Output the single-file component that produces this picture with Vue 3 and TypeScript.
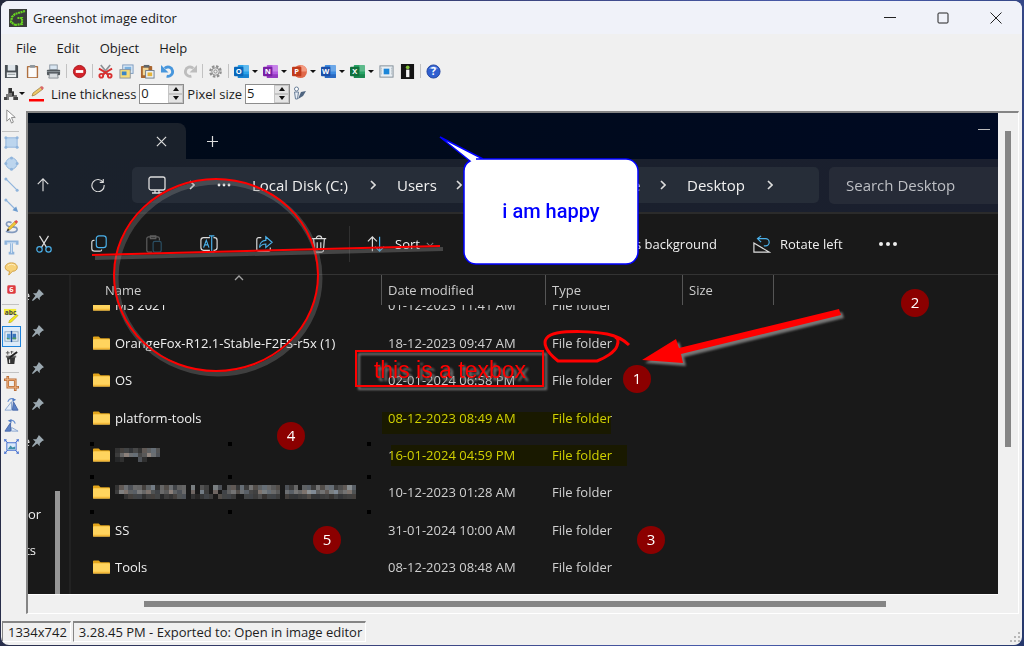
<script setup lang="ts">
import { ref } from 'vue'

interface Tool { id: string; label: string; menu?: boolean }

const menus = ['File', 'Edit', 'Object', 'Help']

const toolbar: (Tool | null)[] = [
  { id: 'save', label: 'Save' }, { id: 'clipboard', label: 'Copy to clipboard' }, { id: 'print', label: 'Print' }, null,
  { id: 'remove', label: 'Delete' }, null,
  { id: 'cut', label: 'Cut' }, { id: 'copy', label: 'Copy' }, { id: 'paste', label: 'Paste' },
  { id: 'undo', label: 'Undo' }, { id: 'redo', label: 'Redo' }, null,
  { id: 'gear', label: 'Settings' }, null,
  { id: 'outlook', label: 'Outlook', menu: true }, { id: 'onenote', label: 'OneNote', menu: true },
  { id: 'powerpoint', label: 'PowerPoint', menu: true }, { id: 'word', label: 'Word', menu: true },
  { id: 'excel', label: 'Excel', menu: true }, { id: 'screen', label: 'Image editor' }, { id: 'imgur', label: 'Imgur' }, null,
  { id: 'help', label: 'Help' },
]

const tools: (Tool | null)[] = [
  { id: 'pointer', label: 'Selection' }, null,
  { id: 'rect', label: 'Rectangle' }, { id: 'ellipse', label: 'Ellipse' }, { id: 'line', label: 'Line' },
  { id: 'arrow', label: 'Arrow' }, { id: 'freehand', label: 'Freehand' }, { id: 'text', label: 'Text box' },
  { id: 'bubble', label: 'Speech bubble' }, { id: 'counter', label: 'Counter' }, null,
  { id: 'highlight', label: 'Highlight' }, { id: 'obfuscate', label: 'Obfuscate' }, { id: 'effects', label: 'Effects' }, null,
  { id: 'crop', label: 'Crop' }, { id: 'rotateRight', label: 'Rotate clockwise' },
  { id: 'rotateLeft', label: 'Rotate counter-clockwise' }, { id: 'resize', label: 'Resize' },
]

const office = (light: string, dark: string, letter: string) =>
  `<rect x="4" y="1" width="12" height="14" rx="1" fill="${light}"/><path d="M10 1h5a1 1 0 0 1 1 1v6h-6z" fill="#fff" opacity=".25"/><path d="M4 11h12v3a1 1 0 0 1-1 1H5a1 1 0 0 1-1-1z" fill="${dark}" opacity=".55"/><rect x="0" y="3" width="10" height="10" rx="1" fill="${dark}"/><text x="5" y="11" text-anchor="middle" font-size="8" font-weight="700" font-family="Open Sans, sans-serif" fill="#fff">${letter}</text>`

const nodes = (pts: number[][]) =>
  pts.map(([x, y]) => `<circle cx="${x}" cy="${y}" r="1.6" fill="#8fb4dc"/>`).join('')

const icons: Record<string, string> = {
  save: '<path d="M1 1h13l1 1v13H1z" fill="#4a5055"/><rect x="4" y="1" width="8" height="6" fill="#dfe5ea"/><rect x="3" y="9" width="10" height="5" fill="#eef1f3"/><path d="M4 11h8" stroke="#8c9499"/>',
  clipboard: '<rect x="2" y="2" width="12" height="13" rx="1" fill="#b0703f"/><rect x="3.500" y="3.500" width="9" height="10.500" fill="#fbfbfb"/><rect x="5" y="1" width="6" height="3" rx="1" fill="#8e979e"/>',
  print: '<rect x="4" y="1" width="8" height="5" fill="#d9e6f2" stroke="#8c98a3"/><rect x="1" y="6" width="14" height="6" rx="1" fill="#555b60"/><path d="M1 8h14" stroke="#888f94"/><path d="M4 10h8l1 5H3z" fill="#d8dcdf" stroke="#8a9095"/>',
  remove: '<circle cx="8" cy="8" r="6.5" fill="#d3232a" stroke="#a9151b"/><rect x="4" y="6.5" width="8" height="3" fill="#fff"/>',
  cut: '<path d="M3 1l8 10M13 1L5 11" stroke="#8b9095" stroke-width="1.8"/><g fill="none" stroke="#d93030" stroke-width="2"><circle cx="3.500" cy="12.500" r="2"/><circle cx="12.500" cy="12.500" r="2"/><path d="M1 5l7 4M15 5L8 9l-3 3M8 9l3 3"/></g>',
  copy: '<rect x="4" y="1" width="11" height="9" fill="#dbe9f7" stroke="#7a99bd"/><rect x="6" y="3" width="7" height="4" fill="#79b0df"/><rect x="1" y="6" width="11" height="9" fill="#f6dc78" stroke="#8b93a0"/><rect x="3" y="8" width="5" height="4" fill="#3b84c6"/>',
  paste: '<rect x="1" y="2" width="12" height="13" rx="1" fill="#a9652f"/><rect x="4" y="1" width="6" height="3" fill="#5f666c"/><rect x="3" y="4" width="6" height="8" fill="#f0d595"/><rect x="6" y="7" width="9" height="8" fill="#eef3f8" stroke="#6e7b88"/><rect x="8" y="9" width="5" height="4" fill="#e4b33a"/>',
  undo: '<path d="M4 4.500a5 5 0 1 1 2 8.500" fill="none" stroke="#4796dc" stroke-width="3"/><path d="M0 1v8h8z" fill="#4796dc"/>',
  redo: '<path d="M12 4.500a5 5 0 1 0-2 8.500" fill="none" stroke="#bdbdbd" stroke-width="3"/><path d="M16 1v8H8z" fill="#bdbdbd"/>',
  gear: '<circle cx="8" cy="8" r="5.500" fill="none" stroke="#8f8f8f" stroke-width="2.500" stroke-dasharray="2.600 1.700"/><circle cx="8" cy="8" r="4" fill="#e0e0e0" stroke="#8f8f8f"/><circle cx="8" cy="8" r="1.600" fill="#f0f0f0" stroke="#8f8f8f"/>',
  outlook: office('#2ba3ea', '#0a67ba', 'O'),
  onenote: office('#b45be0', '#7a1fa5', 'N'),
  powerpoint: '<circle cx="9" cy="8" r="7" fill="#e0694a"/><path d="M9 1a7 7 0 0 1 7 7H9z" fill="#f39a80"/><rect x="0" y="3" width="10" height="10" rx="1" fill="#c13b1b"/><text x="5" y="11" text-anchor="middle" font-size="8" font-weight="700" font-family="Open Sans, sans-serif" fill="#fff">P</text>',
  word: office('#3d8be0', '#1b4fa8', 'W'),
  excel: office('#27a365', '#10703c', 'X'),
  screen: '<rect x="1" y="2" width="14" height="12" fill="#e8eef3" stroke="#7e8b96"/><rect x="5" y="5" width="6" height="6" fill="#1b86d8"/><path d="M2.500 4v8M13.500 4v8" stroke="#9aa5ad" stroke-dasharray="1 1"/>',
  imgur: '<rect x="1" y="0" width="14" height="16" fill="#141414"/><rect x="6.500" y="6" width="3.500" height="8" fill="#f4f4f4"/><circle cx="8.200" cy="3.500" r="2" fill="#83c33a"/>',
  help: '<circle cx="8" cy="8" r="7" fill="#2f5fd0" stroke="#2446a0"/><path d="M3 5a6 5 0 0 1 10 0z" fill="#7fa4ee"/><text x="8" y="12" text-anchor="middle" font-size="11" font-weight="700" font-family="Open Sans, sans-serif" fill="#fff">?</text>',
  pointer: '<path d="M3 1v12l3-3 2 5 2-1-2-5h4z" fill="#fff" stroke="#8a8a8a"/>',
  rect: '<rect x="2" y="3" width="12" height="10" fill="#bcd5ee" stroke="#8fb4dc"/>' + nodes([[2, 3], [14, 3], [2, 13], [14, 13]]),
  ellipse: '<circle cx="8" cy="8" r="6" fill="#bcd5ee" stroke="#8fb4dc"/>' + nodes([[8, 2], [8, 14], [2, 8], [14, 8]]),
  line: '<path d="M2 2l12 12" stroke="#8fb4dc" stroke-width="1.300"/>' + nodes([[2, 2], [14, 14]]),
  arrow: '<path d="M2 2l10 10" stroke="#8fb4dc" stroke-width="1.300"/><path d="M15 15l-6-2 4-4z" fill="#6a9bcf"/>' + nodes([[2, 2]]),
  freehand: '<path d="M8 4C2 1 1 7 5 8s9-1 9 3-8 4-12 2" fill="none" stroke="#8299bd" stroke-width="1.800"/><path d="M4 12l1-3 7-7 2 2-7 7z" fill="#efc637" stroke="#a8862a" stroke-width=".6"/><path d="M11 3l2-2 2 2-2 2z" fill="#e05050"/><path d="M3 13l1-3 2 2z" fill="#333"/>',
  text: '<path d="M2 5V2h12v3M8 2v12M5 14h6" fill="none" stroke="#8fb4dc" stroke-width="3"/><path d="M3 3h10M8 3v11" stroke="#d3e4f5"/>',
  bubble: '<path d="M8 2c8 0 8 9 1 9l-4 4 1-4C-1 10 0 2 8 2z" fill="#f7d27a" stroke="#cf9d3e"/><path d="M4 5c2-2 6-2 8 0" stroke="#fff0c5" fill="none"/>',
  counter: '<rect x="3.500" y="3.500" width="9" height="9" rx="1.500" fill="#dd3a40"/><text x="8" y="11" text-anchor="middle" font-size="8" font-weight="700" font-family="Open Sans, sans-serif" fill="#fff">6</text>',
  highlight: '<path d="M6 13l7-6 2 1-7 7-3 1z" fill="#f3e818" stroke="#a9a11c" stroke-width=".6"/><rect x="0" y="1" width="13" height="6" fill="#f3ec3a"/><text x="7" y="7" text-anchor="middle" font-size="7" font-weight="700" font-family="Open Sans, sans-serif" fill="#444">abc</text>',
  obfuscate: '<rect x="1" y="3" width="14" height="10" fill="#eef5fb" stroke="#8aa4bd"/><rect x="3" y="5" width="4" height="6" fill="#5a9bd5"/><rect x="9" y="5" width="4" height="6" fill="#3976bb"/><path d="M3 9l4 2H3zM9 9h4v2H9z" fill="#4f9960"/><path d="M8 2v12" stroke="#1a4fa0" stroke-width="1.500"/>',
  effects: '<path d="M3 7h9l-1 8H4z" fill="#333"/><path d="M2 6h11v2H2z" fill="#666"/><path d="M6 8L14 2" stroke="#222" stroke-width="2"/><path d="M4 1v4M2 3h4M8 1v3M7 2h3" stroke="#555"/><path d="M6 10v4" stroke="#fff"/>',
  crop: '<path d="M4 0v12h12M0 4h12v12" fill="none" stroke="#b96c35" stroke-width="2.800"/><path d="M4 1v11h11M1 4h11v11" fill="none" stroke="#efb384"/>',
  rotateRight: '<path d="M1 14h7V5z" fill="#e3ecf8" stroke="#8ba6cf"/><path d="M9 14h6L10 5z" fill="#5c82c5" stroke="#4868aa"/><path d="M4 5c2-4 5-4 7-2" fill="none" stroke="#6a91cf" stroke-width="1.300"/><path d="M9 1l4 2-4 2z" fill="#4c78c2"/>',
  rotateLeft: '<path d="M1 14h6V5z" fill="#5c82c5" stroke="#4868aa"/><path d="M8 14h7l-7-4z" fill="#e3ecf8" stroke="#8ba6cf"/><path d="M12 6c-1-3-3-4-5-3" fill="none" stroke="#6a91cf" stroke-width="1.300"/><path d="M8 1L4 3l4 2z" fill="#4c78c2"/>',
  resize: '<rect x="3" y="4" width="10" height="8" fill="#d8e8fa" stroke="#4470d0"/><path d="M4 11l3-4 2 2 3-1v3z" fill="#408fa8"/><path d="M1 1l3 3M15 1l-3 3M1 15l3-3M15 15l-3-3" stroke="#4470d0"/><path d="M0 1h3M1 0v3M13 1h3M15 0v3M0 15h3M1 13v3M13 15h3M15 13v3" stroke="#4470d0"/>',
}

const selected = ref('obfuscate')
const thickness = ref(0)
const pixelSize = ref(5)

const pins = ['e', '', '', '', 'e']

interface FileRow { name: string; date: string; mosaic?: string[] }

/* Brightness maps of the pixelated names, one hex digit per block. */
const files: FileRow[] = [
  { name: 'MS 2021', date: '01-12-2023 11:41 AM' },
  { name: 'OrangeFox-R12.1-Stable-F2FS-r5x (1)', date: '18-12-2023 09:47 AM' },
  { name: 'OS', date: '02-01-2024 06:58 PM' },
  { name: 'platform-tools', date: '08-12-2023 08:49 AM' },
  { name: '', date: '16-01-2024 04:59 PM', mosaic: ['2332425565', '3686645964', '1200042000'] },
  {
    name: '', date: '10-12-2023 01:28 AM',
    mosaic: [
      '256476357264636607053074055263745675404360553746634585',
      '387559674375854706073060367465437767506586798675786774',
      '002333233313234402123304333003334233303223342233232333',
    ],
  },
  { name: 'SS', date: '31-01-2024 10:00 AM' },
  { name: 'Tools', date: '08-12-2023 08:48 AM' },
]

const tints = ['#9a9a9a', '#9aa6b4', '#a89a92', '#8d8d8d', '#a3a9ad']
const blocks = (rows: string[]) =>
  rows.flatMap((row, y) =>
    [...row].map((digit, x) => ({ x, y, fill: tints[(x * 7 + y * 3) % 5], alpha: Math.min(parseInt(digit, 16) / 10, 0.85) })))

const counters = [
  { n: 1, x: 637, y: 379 }, { n: 2, x: 915, y: 303 }, { n: 3, x: 651, y: 540 },
  { n: 4, x: 291, y: 436 }, { n: 5, x: 327, y: 540 },
]
const handles = [444, 477, 512].flatMap(y => [92, 230, 369].map(x => ({ x, y })))
</script>

<template>
  <div class="desktop">
    <main class="window">
      <header class="titlebar">
        <svg class="logo" viewBox="0 0 18 18" aria-hidden="true">
          <rect width="18" height="18" fill="#3a3d3b" />
          <path d="M16 2L6 5 3 8l-1 5 4 3M6 16l7-1V9H8" fill="none" stroke="#67d420" stroke-width="2.200" stroke-dasharray="2 .6" />
        </svg>
        <h1>Greenshot image editor</h1>
        <div class="window-buttons">
          <button aria-label="Minimize"><svg viewBox="0 0 12 12"><path d="M0 5.500h12" /></svg></button>
          <button aria-label="Maximize"><svg viewBox="0 0 12 12"><rect x="1" y="1" width="10" height="10" rx="1" /></svg></button>
          <button aria-label="Close"><svg viewBox="0 0 12 12"><path d="M.5.5l11 11M11.500.5l-11 11" /></svg></button>
        </div>
      </header>

      <nav class="menubar">
        <button v-for="menu in menus" :key="menu">{{ menu }}</button>
      </nav>

      <div class="toolbar">
        <template v-for="(tool, i) in toolbar" :key="i">
          <i v-if="!tool" class="divider"></i>
          <button v-else :aria-label="tool.label">
            <svg viewBox="0 0 16 16" v-html="icons[tool.id]"></svg>
            <span v-if="tool.menu" class="caret"></span>
          </button>
        </template>
      </div>

      <div class="properties">
        <button class="fill" aria-label="Obfuscation mode">
          <svg viewBox="0 0 16 16"><path d="M5 2h4v3h2v4h3v5h-4v-3H6v3H1v-2h2V8h2z" fill="#777" /><path d="M6 2h3v4h2v4H9V7H6z" fill="#333" /><path d="M1 11h3v3H1zM11 11h4v3h-4z" fill="#444" /></svg>
          <span class="caret"></span>
        </button>
        <button class="colour" aria-label="Line colour">
          <svg viewBox="0 0 16 16"><path d="M3 10l1-3 8-6 2 2-8 6z" fill="#edc96a" stroke="#97763a" stroke-width=".7" /><path d="M11 1l2-1 2 2-2 2z" fill="#d96868" /><path d="M0 13h15v2.500H0z" fill="#f00" /></svg>
        </button>
        <label for="thickness">Line thickness</label>
        <span class="spinner">
          <input id="thickness" v-model="thickness" type="text" />
          <span class="steps">
            <button aria-label="Thicker" @click="thickness++"><i class="up"></i></button>
            <button aria-label="Thinner" @click="thickness--"><i class="down"></i></button>
          </span>
        </span>
        <label for="pixels">Pixel size</label>
        <span class="spinner">
          <input id="pixels" v-model="pixelSize" type="text" />
          <span class="steps">
            <button aria-label="Larger" @click="pixelSize++"><i class="up"></i></button>
            <button aria-label="Smaller" @click="pixelSize--"><i class="down"></i></button>
          </span>
        </span>
        <button class="shadow-toggle" aria-label="Drop shadow">
          <svg viewBox="0 0 16 16"><circle cx="3.500" cy="3" r="2" fill="#fff" stroke="#6a7f99" /><path d="M1.500 6h4l-1 7h-2z" fill="#e6edf5" stroke="#6a7f99" /><path d="M5 13l3-7 5-1-3 5z" fill="#4f6580" /></svg>
        </button>
      </div>

      <div class="workspace">
        <div class="toolbox">
          <template v-for="(tool, i) in tools" :key="i">
            <i v-if="!tool" class="rule"></i>
            <button v-else :aria-label="tool.label" :class="{ active: selected === tool.id }" @click="selected = tool.id">
              <svg viewBox="0 0 16 16" v-html="icons[tool.id]"></svg>
            </button>
          </template>
        </div>

        <div class="viewport">
          <div class="shot">
            <div class="tabs">
              <div class="tab"><button aria-label="Close tab"><svg viewBox="0 0 12 12"><path d="M1 1l10 10M11 1L1 11" /></svg></button></div>
              <button aria-label="New tab"><svg viewBox="0 0 12 12"><path d="M6 0v12M0 6h12" /></svg></button>
              <span class="minimize"></span>
            </div>

            <div class="navigation">
              <svg class="up-arrow" viewBox="0 0 16 16"><path d="M8 15V1M2 7l6-6 6 6" /></svg>
              <svg class="refresh" viewBox="0 0 16 16"><path d="M14 5a7 7 0 1 0 1 3M14 1v4h-4" /></svg>
              <div class="address">
                <svg class="monitor" viewBox="0 0 18 18"><rect x="1" y="1" width="16" height="13" rx="2" /><path d="M7 14v3M11 14v3M4 17h10" /></svg>
                <svg class="chevron first-chevron" viewBox="0 0 6 10"><path d="M1 1l4 4-4 4" /></svg>
                <svg class="dots" viewBox="0 0 14 4"><circle cx="2" cy="2" r="1.400" /><circle cx="7" cy="2" r="1.400" /><circle cx="12" cy="2" r="1.400" /></svg>
                <span>Local Disk (C:)</span>
                <svg class="chevron" viewBox="0 0 6 10"><path d="M1 1l4 4-4 4" /></svg>
                <span>Users</span>
                <svg class="chevron" viewBox="0 0 6 10"><path d="M1 1l4 4-4 4" /></svg>
                <span>e</span>
                <svg class="chevron" viewBox="0 0 6 10"><path d="M1 1l4 4-4 4" /></svg>
                <span>Desktop</span>
                <svg class="chevron" viewBox="0 0 6 10"><path d="M1 1l4 4-4 4" /></svg>
              </div>
              <input class="search" type="text" placeholder="Search Desktop" aria-label="Search Desktop" />
            </div>

            <div class="commands">
              <div class="file-actions">
                <button aria-label="Cut"><svg viewBox="0 0 20 20"><path d="M5 1l8 13M15 1L7 14" /><g class="blue"><circle cx="5" cy="16" r="3" /><circle cx="15" cy="16" r="3" /></g></svg></button>
                <button aria-label="Copy"><svg viewBox="0 0 20 20"><path d="M5 6H4a2 2 0 0 0-2 2v7a3 3 0 0 0 3 3h6a2 2 0 0 0 2-2" /><rect class="blue" x="7" y="1" width="11" height="13" rx="3" /></svg></button>
                <button class="dim" aria-label="Paste"><svg viewBox="0 0 20 20"><path d="M8 19H4a2 2 0 0 1-2-2V4a2 2 0 0 1 2-2h10a2 2 0 0 1 2 2v2M6 1h6v3H6z" /><rect class="blue" x="9" y="7" width="9" height="12" rx="2" /></svg></button>
                <button aria-label="Rename"><svg viewBox="0 0 20 20"><path d="M11 3H4a3 3 0 0 0-3 3v8a3 3 0 0 0 3 3h7M15 3h1a3 3 0 0 1 3 3v8a3 3 0 0 1-3 3h-1" /><path class="blue" d="M13 1v18M10 1h6M10 19h6M4 14l3-8 3 8M5 11h4" /></svg></button>
                <button aria-label="Share"><svg viewBox="0 0 20 20"><path d="M7 3H4a2 2 0 0 0-2 2v11a2 2 0 0 0 2 2h11a2 2 0 0 0 2-2v-2" /><path class="blue" d="M12 2l7 6-7 6v-4c-4 0-6 2-7 4 0-5 3-8 7-8z" /></svg></button>
                <button aria-label="Delete"><svg viewBox="0 0 20 20"><path d="M2 4h16M4 4l1 13a2 2 0 0 0 2 2h6a2 2 0 0 0 2-2l1-13M7 4a3 3 0 0 1 6 0M8 8v7M12 8v7" /></svg></button>
              </div>
              <i class="bar"></i>
              <button class="sort"><svg viewBox="0 0 20 20"><path d="M6 18V2M1 7l5-5 5 5" /><path class="blue" d="M14 2v16M9 13l5 5 5-5" /></svg>Sort<svg class="down-chevron" viewBox="0 0 10 6"><path d="M1 1l4 4 4-4" /></svg></button>
              <button class="background">s background</button>
              <button class="rotate"><svg viewBox="0 0 20 20"><path d="M1 9v10h17z" /><path class="blue" d="M9 1L5 4l4 4M5 4h9a4 4 0 0 1 0 8h-2" /></svg>Rotate left</button>
              <button class="more" aria-label="More"><svg viewBox="0 0 20 4"><circle cx="3" cy="2" r="2" /><circle cx="10" cy="2" r="2" /><circle cx="17" cy="2" r="2" /></svg></button>
            </div>

            <div class="browser">
              <aside class="places">
                <div v-for="(p, i) in pins" :key="i" class="pin">
                  <span>{{ p }}</span>
                  <svg viewBox="0 0 14 14"><path d="M8 0l6 6-2 1-3 3 0 3-3-3-5 4-1-1 4-5-3-3h4l2-3z" /></svg>
                </div>
                <div></div>
                <div>or</div>
                <div class="cut-off">ts</div>
                <i class="places-thumb"></i>
              </aside>
              <table>
                <thead>
                  <tr>
                    <th class="name">Name<svg viewBox="0 0 10 6"><path d="M1 5l4-4 4 4" /></svg></th>
                    <th class="date">Date modified</th>
                    <th class="type">Type</th>
                    <th class="size">Size</th>
                    <th></th>
                  </tr>
                </thead>
                <tbody>
                  <tr v-for="(file, i) in files" :key="i" :class="{ first: i === 0 }">
                    <td>
                      <div class="cell file">
                        <svg class="folder" :class="{ pixelated: file.mosaic }" viewBox="0 0 18 14"><path d="M0 1a1 1 0 0 1 1-1h5l2 2h9a1 1 0 0 1 1 1v3H0z" fill="#e3a51a" /><rect y="3" width="18" height="11" rx="1" fill="#ffd45e" /><path d="M0 12h18v1a1 1 0 0 1-1 1H1a1 1 0 0 1-1-1z" fill="#f4b93a" /></svg>
                        <svg v-if="file.mosaic" class="mosaic" :class="{ long: file.mosaic[0].length > 20 }" :viewBox="`0 0 ${file.mosaic[0].length} 3`" preserveAspectRatio="none" shape-rendering="crispEdges">
                          <rect v-for="(b, k) in blocks(file.mosaic)" :key="k" :x="b.x" :y="b.y" width="1" height="1" :fill="b.fill" :fill-opacity="b.alpha" />
                        </svg>
                        <template v-else>{{ file.name }}</template>
                      </div>
                    </td>
                    <td><div class="cell">{{ file.date }}</div></td>
                    <td><div class="cell">File folder</div></td>
                    <td></td>
                    <td></td>
                  </tr>
                </tbody>
              </table>
            </div>

            <div class="marker marker-one"></div>
            <div class="marker marker-two"></div>

            <svg class="annotations" viewBox="28 113 970 481">
              <rect v-for="h in handles" :key="`${h.x}-${h.y}`" :x="h.x - 2" :y="h.y - 2" width="4" height="4" fill="#000" />
              <g fill="none">
                <ellipse cx="218" cy="278" rx="102" ry="96" stroke="#888" stroke-opacity=".35" stroke-width="5" />
                <ellipse cx="216" cy="275" rx="102" ry="96" stroke="#f00" stroke-width="2" />
                <path d="M95 258l348-9" stroke="#888" stroke-opacity=".4" stroke-width="4" />
                <path d="M92 255l348-9" stroke="#f00" stroke-width="2" />
              </g>
              <g class="cast">
                <path d="M642 360l34-21 3 9 160-39 2 6-160 39 2 9z" fill="#f00" />
              </g>
              <path d="M629 345c-6-6-12-9-22-11-16-3-38-3-50-1-10 2-14 7-11 14 2 6 7 10 12 14h39c8-3 18-9 20-15 2-5 1-8-2-9" fill="none" stroke="#f00" stroke-width="3" stroke-linejoin="round" />
              <g class="cast">
                <rect x="356" y="351" width="187" height="35" fill="none" stroke="#f00" stroke-width="2" />
                <text class="textbox" x="450" y="378">this is a texbox</text>
              </g>
              <path d="M476 159h150a12 12 0 0 1 12 12v81a12 12 0 0 1-12 12H476a12 12 0 0 1-12-12v-81q0-7 6-10l-30-24 43 22z" fill="#fff" stroke="#00f" stroke-width="1.500" />
              <text class="speech" x="551" y="218">i am happy</text>
              <g v-for="c in counters" :key="c.n">
                <circle :cx="c.x" :cy="c.y" r="14" fill="#8b0000" />
                <text class="number" :x="c.x" :y="c.y + 5">{{ c.n }}</text>
              </g>
            </svg>
          </div>
          <div class="vertical-scroll"><i></i></div>
          <div class="horizontal-scroll"><i></i></div>
        </div>
      </div>

      <footer class="status">
        <span>1334x742</span>
        <span>3.28.45 PM - Exported to: Open in image editor</span>
        <svg class="grip" viewBox="0 0 10 10"><path d="M8 0h2v2H8zM4 4h2v2H4zM8 4h2v2H8zM0 8h2v2H0zM4 8h2v2H4zM8 8h2v2H8z" fill="#b8b8b8" /></svg>
      </footer>
    </main>
  </div>
</template>

<style>
body { margin: 0; }
</style>

<style scoped>
* { box-sizing: border-box; }
button { padding: 0; border: 0; background: none; color: inherit; font: inherit; }
svg { display: block; flex: none; }

.desktop {
  display: flex;
  min-height: 100vh;
  padding: 1px 2px 1px 1px;
  background: linear-gradient(100deg, #23283c, #3c4580 45%, #4a5dae 75%, #26386c);
  font-family: "Open Sans", "Noto Sans", sans-serif;
  font-size: 13px;
  color: #1c1c1c;
}
.window { flex: 1; min-width: 0; display: flex; flex-direction: column; border-radius: 8px; overflow: hidden; background: #f0f0f0; }

.titlebar { display: flex; align-items: center; height: 33px; padding-left: 8px; background: #f0f2f9; }
.logo { width: 18px; height: 18px; margin-right: 6px; }
h1 { margin: 0; font-size: 13px; font-weight: 400; }
.window-buttons { display: flex; margin-left: auto; }
.window-buttons button { display: grid; place-items: center; width: 53px; height: 33px; }
.window-buttons svg { width: 12px; height: 12px; fill: none; stroke: #222; }

.menubar { display: flex; align-items: center; gap: 20px; height: 27px; padding-left: 15px; }

.toolbar { display: flex; align-items: center; gap: 4px; height: 20px; padding-left: 2px; }
.toolbar button { display: flex; align-items: center; }
.toolbar svg { width: 17px; height: 15px; }
.divider { width: 1px; height: 14px; background: #c2c2c2; }
.caret { width: 6px; border: solid transparent; border-width: 3px 3px 0; border-top-color: #111; }
.toolbar .caret { margin-left: 2px; }

.properties { display: flex; align-items: center; height: 25px; padding-left: 2px; }
.properties svg { width: 16px; height: 16px; }
.fill { display: flex; align-items: center; width: 25px; }
.colour { width: 16px; margin: 0 6px 0 1px; }
.spinner { display: flex; width: 45px; height: 20px; margin: 0 3px; border: 1px solid #8d8d8d; background: #fff; }
.spinner input { flex: 1; min-width: 0; width: 0; padding: 0 0 2px 1px; border: 0; outline: 0; background: none; font: inherit; color: inherit; }
.steps { display: grid; width: 15px; grid-template-rows: 1fr 1fr; background: #e4e4e4; }
.steps button { display: grid; place-items: center; border: 1px solid #c5c5c5; }
.up, .down { border: solid transparent; border-width: 0 3px 4px; border-bottom-color: #111; }
.down { border-width: 4px 3px 0; border-top-color: #111; }

.workspace { flex: 1; display: flex; padding-right: 3px; }
.toolbox { display: flex; flex-direction: column; width: 25px; padding-left: 1px; }
.toolbox button { display: grid; place-items: center; width: 19px; height: 21px; }
.toolbox svg { width: 15px; height: 15px; }
.toolbox .active { border: 1px solid #1e84dc; background: #dcebf9; }
.rule { width: 17px; height: 5px; border-bottom: 1px solid #c2c2c2; }

.viewport {
  flex: 1;
  min-width: 0;
  display: grid;
  grid-template: 1fr 19px / 1fr 20px;
  margin-top: 5px;
  border: solid;
  border-width: 2px 1px 1px 2px;
  border-color: #858585 #fff #fff #858585;
}
.vertical-scroll { padding: 18px 0 0 7px; }
.vertical-scroll i { display: block; width: 6px; height: 316px; background: #858585; }
.horizontal-scroll { padding: 6px 11.5% 0 12%; border-top: 1px solid #fff; }
.horizontal-scroll i { display: block; height: 6px; background: #858585; }

.shot { position: relative; isolation: isolate; display: flex; flex-direction: column; min-width: 0; overflow: hidden; background: #191919; color: #f0f0f0; }
.shot svg { fill: none; stroke: #ddd; stroke-width: 1.3; }
.shot .blue { stroke: #4bb2ec; fill: none; }

.tabs { display: flex; align-items: center; height: 46px; padding-top: 10px; background: linear-gradient(90deg, #000a18, #000a22); }
.tabs svg { width: 11px; height: 11px; }
.tab { display: flex; align-items: center; justify-content: flex-end; width: 158px; height: 36px; padding-right: 19px; margin-right: 21px; border-radius: 0 8px 0 0; background: #1a212b; }
.minimize { align-self: flex-start; width: 12px; height: 1px; margin: 6px 8px 0 auto; background: #bbb; }

.navigation { display: flex; align-items: center; height: 55px; padding-bottom: 1px; border-bottom: 2px solid #2b2b2b; background: linear-gradient(90deg, #1a212b, #1a1f2e); font-size: 15px; }
.up-arrow { width: 14px; height: 14px; margin: 0 41px 0 8px; }
.refresh { width: 14px; height: 14px; margin-right: 27px; }
.address { display: grid; grid-template-columns: 41px 28px 35px 118px 27px 59px 176px 28px 27px 80px 1fr; align-items: center; width: 687px; height: 36px; padding-left: 16px; border-radius: 5px; background: #262d38; white-space: nowrap; }
.monitor { width: 18px; height: 18px; }
.chevron { width: 6px; height: 10px; }
.shot .chevron { stroke-width: 1.6; }
.dots { width: 14px; height: 4px; }
.dots circle, .more circle { fill: #eee; stroke: none; }
.search { flex: 1; min-width: 0; height: 37px; margin-left: 10px; padding: 0 0 0 17px; border: 0; border-radius: 5px 0 0 5px; background: #262b37; color: #eee; font: inherit; }
.search::placeholder { color: #bdbfc4; opacity: 1; }

.commands { display: flex; align-items: center; height: 61px; border-bottom: 1px solid #333; }
.commands svg { width: 18px; height: 18px; }
.commands button { display: flex; align-items: center; white-space: nowrap; }
.file-actions { display: flex; gap: 23px; }
.file-actions button { justify-content: center; width: 32px; }
.dim { opacity: .35; }
.bar { width: 1px; height: 36px; margin: 0 17px 0 14px; background: #303030; }
.sort { gap: 10px; width: 268px; }
.commands .down-chevron { width: 8px; height: 5px; opacity: .5; }
.commands .sort .down-chevron { margin-left: -4px; }
.background { width: 118px; }
.rotate { gap: 9px; width: 125px; }
.commands .more svg { width: 20px; height: 4px; }

.browser { flex: 1; display: flex; }
.places { position: relative; display: grid; grid-template-rows: repeat(4, 37px 36px); width: 43px; padding-top: 1px; border-right: 2px solid #222; }
.places > div { display: flex; align-items: center; min-width: 0; }
.pin span { width: 4px; padding-right: 2px; overflow: hidden; direction: rtl; }
.shot .pin svg { width: 12px; height: 12px; fill: #9ba8b0; stroke: none; }
.cut-off { direction: rtl; justify-content: flex-start; width: 8px; overflow: hidden; }
.places-thumb { position: absolute; left: 27px; top: 216px; bottom: 0; width: 5px; background: #969696; }

table { flex: 1; min-width: 0; align-self: flex-start; table-layout: fixed; border-collapse: separate; border-spacing: 0; height: 311px; }
th { height: 30px; padding: 0 0 0 6px; border-right: 1px solid #555; text-align: left; font-weight: 400; color: #ccc; }
th:last-child { border: 0; }
.name { position: relative; width: 311px; padding-left: 34px; }
.name svg { position: absolute; top: 0; left: 163px; width: 10px; height: 6px; opacity: .7; }
.date { width: 164px; }
.type { width: 137px; }
.size { width: 91px; }
td { padding: 0 0 0 6px; color: #d0d0d0; }
td:first-child { padding-left: 22px; color: #f0f0f0; }
.cell { display: flex; align-items: center; height: 18px; white-space: nowrap; }
.first td { height: 19px; vertical-align: top; }
.first .cell { align-items: flex-end; height: 19px; padding-bottom: 10px; overflow: hidden; }
.folder { width: 17px; height: 14px; margin-right: 5px; }
.first .folder { margin-bottom: 3px; }
.shot .folder, .shot .mosaic { stroke: none; }
.mosaic { width: 45px; height: 14px; }
.mosaic.long { width: 241px; }

.marker { position: absolute; background: #ff0; mix-blend-mode: multiply; }
.marker-one { left: 354px; top: 299px; width: 229px; height: 22px; }
.marker-two { left: 363px; top: 332px; width: 236px; height: 21px; }
.annotations { position: absolute; left: 0; top: 0; width: 970px; height: 481px; }
.shot .annotations { stroke: none; }
.cast { filter: drop-shadow(3px 3px 1px #777); }
.annotations text { text-anchor: middle; stroke: none; }
.textbox { font: 23px "Liberation Sans", sans-serif; fill: #f00; }
.speech { font: 500 20px Roboto, sans-serif; fill: #00f; }
.number { font: 15px "Open Sans", sans-serif; fill: #fff; }

.status { display: flex; gap: 2px; align-items: flex-start; height: 29px; margin-top: 2px; padding: 5px 2px 0 1px; }
.status span { height: 21px; padding: 0 3px 0 5px; border: solid; border-width: 2px 1px 1px; border-color: #858585 #fff #fff #858585; line-height: 18px; white-space: nowrap; }
.grip { width: 10px; height: 10px; margin: 11px 0 0 auto; }
</style>
